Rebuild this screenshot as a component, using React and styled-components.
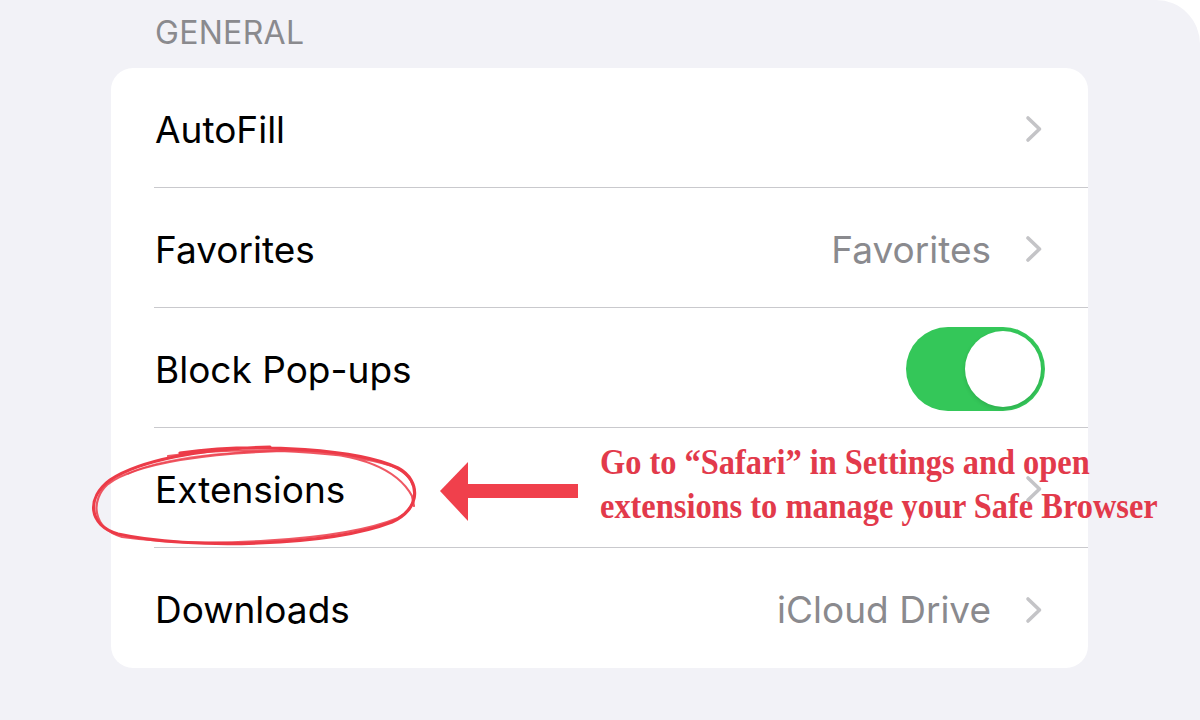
import styled, { createGlobalStyle } from "styled-components";

const GlobalStyle = createGlobalStyle`
  html, body {
    margin: 0;
    padding: 0;
    background: #ffffff;
  }
  * { box-sizing: border-box; }
`;

const Page = styled.div`
  width: 1200px;
  height: 720px;
  background: #f2f2f7;
  border-top-right-radius: 44px;
  overflow: hidden;
  font-family: Inter, "Noto Sans", "Liberation Sans", sans-serif;
  -webkit-font-smoothing: antialiased;
`;

const SectionHeader = styled.div`
  height: 68px;
  padding: 14px 0 0 155px;
  font-size: 32px;
  line-height: 38px;
  color: #8a8a8e;
  letter-spacing: 0.3px;
`;

const Card = styled.div`
  position: relative;
  margin-left: 111px;
  width: 977px;
  background: #ffffff;
  border-radius: 22px;
`;

const Row = styled.div`
  padding-left: 43px;
`;

const RowInner = styled.div`
  height: 120px;
  display: flex;
  align-items: center;
  padding-right: 45px;
  padding-top: 3px;
  border-bottom: ${(p) => (p.last ? "none" : "1px solid #c9c9cd")};
`;

const Label = styled.span`
  flex: 1;
  font-size: 37px;
  color: #000000;
  padding-left: 1px;
`;

const Value = styled.span`
  font-size: 37px;
  color: #8a8a8e;
  margin-right: 34px;
`;

const Chevron = styled.svg`
  position: relative;
  z-index: 2;
  width: 18px;
  height: 28px;
  flex-shrink: 0;
`;

const Toggle = styled.div`
  width: 139px;
  height: 84px;
  border-radius: 42px;
  background: #34c759;
  padding: 4px;
  display: flex;
  justify-content: flex-end;
  margin-right: -2px;
`;

const Knob = styled.div`
  width: 76px;
  height: 76px;
  border-radius: 50%;
  background: #ffffff;
  box-shadow: 0 2px 4px rgba(0, 0, 0, 0.12);
`;

const Annotation = styled.div`
  position: absolute;
  left: 489px;
  top: 372px;
  z-index: 1;
  font-family: "Liberation Serif", "DejaVu Serif", serif;
  font-weight: bold;
  font-size: 36px;
  line-height: 44px;
  color: #e23a4b;
  white-space: nowrap;
  transform: scaleX(0.9);
  transform-origin: left top;
`;

const Markup = styled.svg`
  position: absolute;
  left: -111px;
  top: -68px;
  width: 1200px;
  height: 720px;
  pointer-events: none;
  z-index: 1;
`;

const ChevronIcon = () => (
  <Chevron viewBox="0 0 18 28">
    <path
      d="M3 3 L14.5 14 L3 25"
      fill="none"
      stroke="#c4c4c7"
      strokeWidth="3.6"
      strokeLinecap="round"
      strokeLinejoin="round"
    />
  </Chevron>
);

const rows = [
  { label: "AutoFill", chevron: true },
  { label: "Favorites", value: "Favorites", chevron: true },
  { label: "Block Pop-ups", toggle: true },
  { label: "Extensions", chevron: true },
  { label: "Downloads", value: "iCloud Drive", chevron: true },
];

export default function App() {
  return (
    <>
      <GlobalStyle />
      <Page>
        <SectionHeader>GENERAL</SectionHeader>
        <Card>
          {rows.map((r, i) => (
            <Row key={r.label}>
              <RowInner last={i === rows.length - 1}>
                <Label>{r.label}</Label>
                {r.value && <Value>{r.value}</Value>}
                {r.toggle && (
                  <Toggle>
                    <Knob />
                  </Toggle>
                )}
                {r.chevron && <ChevronIcon />}
              </RowInner>
            </Row>
          ))}

          {/* hand drawn red markup over the Extensions row */}
          <Markup viewBox="0 0 1200 720">
            <g fill="none" stroke="#ec3b48" strokeLinecap="round">
              <path
                d="M180 453 C 260 442, 360 450, 398 468 C 422 481, 420 510, 392 522 C 330 546, 190 550, 118 534 C 88 525, 86 498, 110 480 C 140 460, 200 449, 270 447"
                strokeWidth="3.2"
              />
              <path
                d="M168 456 C 250 445, 350 452, 392 466 C 420 478, 422 504, 398 518 C 340 542, 200 548, 122 537 C 92 528, 90 500, 108 484 C 135 464, 210 451, 300 451 C 362 454, 398 470, 412 496 L 414 506"
                strokeWidth="2.2"
                opacity="0.85"
              />
              <path
                d="M128 474 C 160 458, 230 449, 320 451"
                strokeWidth="1.6"
                opacity="0.7"
              />
            </g>
            <g fill="#f0404c">
              <polygon points="440,491 468,462 468,521" />
              <rect x="466" y="484" width="112" height="14" />
            </g>
          </Markup>

          <Annotation>
            Go to “Safari” in Settings and open
            <br />
            extensions to manage your Safe Browser
          </Annotation>
        </Card>
      </Page>
    </>
  );
}
